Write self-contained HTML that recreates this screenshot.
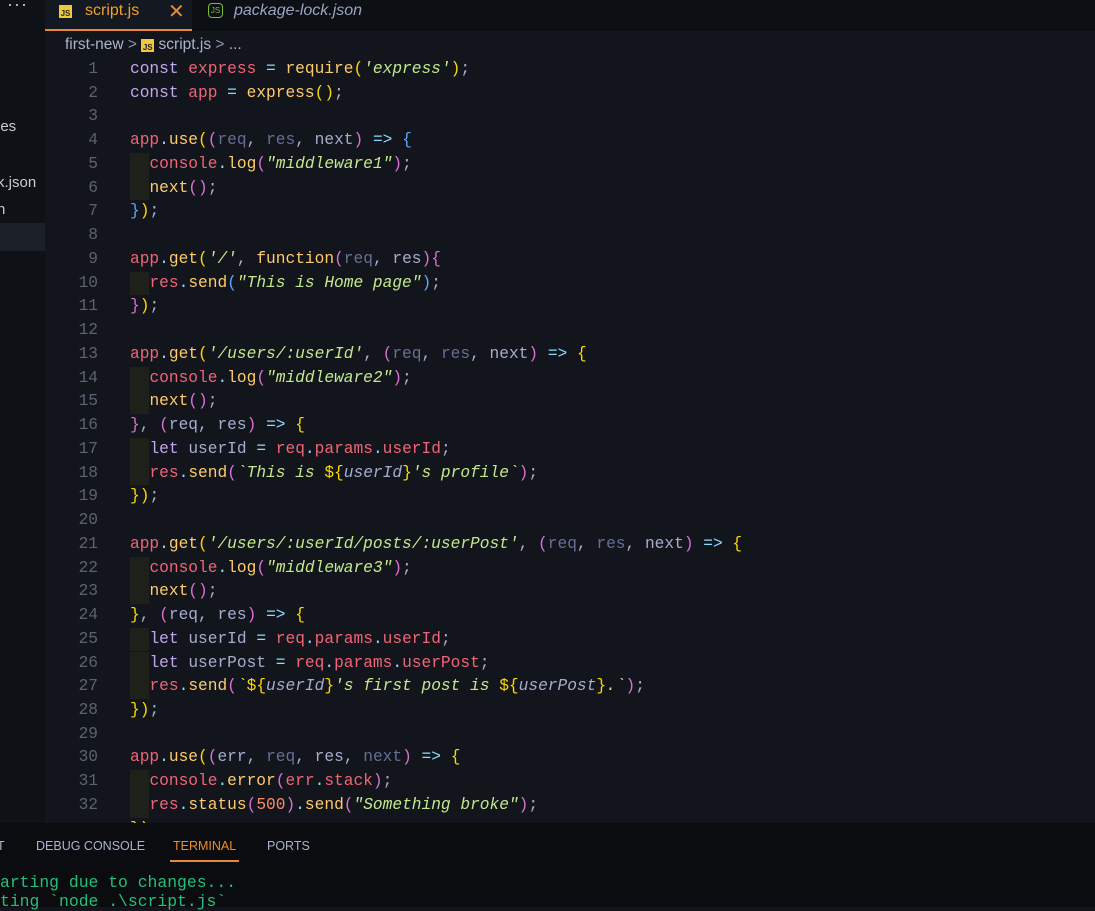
<!DOCTYPE html>
<html><head><meta charset="utf-8"><style>
body{margin:0;width:1095px;height:907px;overflow:hidden;background:#12151b;font-family:"Liberation Sans",sans-serif;position:relative}
.side{position:absolute;left:0;top:0;width:45px;height:823px;background:#0e1115;overflow:hidden}
.side div{position:absolute;color:#c8ccd4;font-size:15px;white-space:nowrap}
.tabs{position:absolute;left:45px;top:0;right:0;height:31px;background:#0c0f13}
.tab1{position:absolute;left:0;top:0;width:147px;height:29px;background:#141820;border-bottom:2px solid #e8893a}
.js{display:inline-block;background:#f0c83c;color:#222;font-size:8px;font-weight:bold;width:13px;height:13px;line-height:17px;text-align:center;box-sizing:border-box;position:absolute}
.code{position:absolute;left:0;top:0;font-family:"Liberation Mono",monospace;font-size:16.2px}
.ln{position:absolute;width:98px;text-align:right;color:#5c6370;left:0}
.cl{position:absolute;left:130px;white-space:pre;color:#a6accd}
.ig{position:absolute;left:130px;width:19px;background:#1e2119}
.k{color:#c0a6ec}.v{color:#f06478}.f{color:#ffcb6b}.d{color:#89ddff}.y{color:#ffd700}.p{color:#da70d6}.b{color:#5aa9ff}
.s{color:#c3e88d;font-style:italic}.u{color:#a6accd}.g{color:#676e95}.o{color:#89ddff}.n{color:#f78c6c}
.panel{position:absolute;left:0;top:823px;width:1095px;height:84px;background:#0a0c0f}
.pt{position:absolute;top:16px;font-size:12.5px;color:#a9b4cc}
.term{position:absolute;left:0;font-family:"Liberation Mono",monospace;font-size:16.4px;color:#23c07a;white-space:pre}
</style></head><body>
<div class="side">
<div style="left:7px;top:-6px;font-size:18px;letter-spacing:1px">···</div>
<div style="left:-3px;top:118px">les</div>
<div style="left:-3px;top:174px">k.json</div>
<div style="left:-3px;top:201px">n</div>
<div style="left:0;top:223px;width:45px;height:28px;background:#1a1f28"></div>
</div>
<div class="tabs">
<div class="tab1"><span class="js" style="left:14px;top:5px">JS</span><span style="position:absolute;left:40px;top:2px;color:#f0a030;font-size:16px">script.js</span><span style="position:absolute;left:123px;top:-1px;color:#f08a2a;font-size:20px">✕</span></div>
<span style="position:absolute;left:163px;top:3px;width:13px;height:13px;border:1.5px solid #7dbb3a;border-radius:4px;color:#7dbb3a;font-size:8px;text-align:center;line-height:14px">JS</span>
<span style="position:absolute;left:189px;top:2px;color:#9aa5c0;font-size:16px;font-style:italic">package-lock.json</span>
</div>
<div style="position:absolute;left:65px;top:36px;color:#a9b4cc;font-size:15.5px;white-space:nowrap">first-new <span style="color:#8a93a8">&gt;</span> <span class="js" style="position:relative;display:inline-block;top:1px">JS</span> script.js <span style="color:#8a93a8">&gt;</span> ...</div>
<div class="code" id="c"></div>
<div class="panel">
<div class="pt" style="left:-3px">T</div>
<div class="pt" style="left:36px">DEBUG CONSOLE</div>
<div class="pt" style="left:173px;color:#f08a2a">TERMINAL</div>
<div style="position:absolute;left:170px;top:37px;width:69px;height:2px;background:#e8893a"></div>
<div class="pt" style="left:267px">PORTS</div>
<div class="term" style="top:50px">arting due to changes...</div>
<div class="term" style="top:69px">ting `node .\script.js`</div>
</div>
<script>
var L=[
'<span class="k">const</span> <span class="v">express</span> <span class="o">=</span> <span class="f">require</span><span class="y">(</span><span class="s">\'express\'</span><span class="y">)</span>;',
'<span class="k">const</span> <span class="v">app</span> <span class="o">=</span> <span class="f">express</span><span class="y">()</span>;',
'',
'<span class="v">app</span><span class="d">.</span><span class="f">use</span><span class="y">(</span><span class="p">(</span><span class="g">req</span>, <span class="g">res</span>, <span class="u">next</span><span class="p">)</span> <span class="o">=&gt;</span> <span class="b">{</span>',
'  <span class="v">console</span><span class="d">.</span><span class="f">log</span><span class="p">(</span><span class="s">"middleware1"</span><span class="p">)</span>;',
'  <span class="f">next</span><span class="p">()</span>;',
'<span class="b">}</span><span class="y">)</span>;',
'',
'<span class="v">app</span><span class="d">.</span><span class="f">get</span><span class="y">(</span><span class="s">\'/\'</span>, <span class="f">function</span><span class="p">(</span><span class="g">req</span>, <span class="u">res</span><span class="p">)</span><span class="p">{</span>',
'  <span class="v">res</span><span class="d">.</span><span class="f">send</span><span class="b">(</span><span class="s">"This is Home page"</span><span class="b">)</span>;',
'<span class="p">}</span><span class="y">)</span>;',
'',
'<span class="v">app</span><span class="d">.</span><span class="f">get</span><span class="y">(</span><span class="s">\'/users/:userId\'</span>, <span class="p">(</span><span class="g">req</span>, <span class="g">res</span>, <span class="u">next</span><span class="p">)</span> <span class="o">=&gt;</span> <span class="y">{</span>',
'  <span class="v">console</span><span class="d">.</span><span class="f">log</span><span class="p">(</span><span class="s">"middleware2"</span><span class="p">)</span>;',
'  <span class="f">next</span><span class="p">()</span>;',
'<span class="p">}</span>, <span class="p">(</span><span class="u">req</span>, <span class="u">res</span><span class="p">)</span> <span class="o">=&gt;</span> <span class="y">{</span>',
'  <span class="k">let</span> <span class="u">userId</span> <span class="o">=</span> <span class="v">req</span><span class="d">.</span><span class="v">params</span><span class="d">.</span><span class="v">userId</span>;',
'  <span class="v">res</span><span class="d">.</span><span class="f">send</span><span class="p">(</span><span class="s">`This is </span><span class="y">${</span><span class="u" style="font-style:italic">userId</span><span class="y">}</span><span class="s">\'s profile`</span><span class="p">)</span>;',
'<span class="y">}</span><span class="y">)</span>;',
'',
'<span class="v">app</span><span class="d">.</span><span class="f">get</span><span class="y">(</span><span class="s">\'/users/:userId/posts/:userPost\'</span>, <span class="p">(</span><span class="g">req</span>, <span class="g">res</span>, <span class="u">next</span><span class="p">)</span> <span class="o">=&gt;</span> <span class="y">{</span>',
'  <span class="v">console</span><span class="d">.</span><span class="f">log</span><span class="p">(</span><span class="s">"middleware3"</span><span class="p">)</span>;',
'  <span class="f">next</span><span class="p">()</span>;',
'<span class="y">}</span>, <span class="p">(</span><span class="u">req</span>, <span class="u">res</span><span class="p">)</span> <span class="o">=&gt;</span> <span class="y">{</span>',
'  <span class="k">let</span> <span class="u">userId</span> <span class="o">=</span> <span class="v">req</span><span class="d">.</span><span class="v">params</span><span class="d">.</span><span class="v">userId</span>;',
'  <span class="k">let</span> <span class="u">userPost</span> <span class="o">=</span> <span class="v">req</span><span class="d">.</span><span class="v">params</span><span class="d">.</span><span class="v">userPost</span>;',
'  <span class="v">res</span><span class="d">.</span><span class="f">send</span><span class="p">(</span><span class="s">`</span><span class="y">${</span><span class="u" style="font-style:italic">userId</span><span class="y">}</span><span class="s">\'s first post is </span><span class="y">${</span><span class="u" style="font-style:italic">userPost</span><span class="y">}</span><span class="s">.`</span><span class="p">)</span>;',
'<span class="y">}</span><span class="y">)</span>;',
'',
'<span class="v">app</span><span class="d">.</span><span class="f">use</span><span class="y">(</span><span class="p">(</span><span class="u">err</span>, <span class="g">req</span>, <span class="u">res</span>, <span class="g">next</span><span class="p">)</span> <span class="o">=&gt;</span> <span class="y">{</span>',
'  <span class="v">console</span><span class="d">.</span><span class="f">error</span><span class="p">(</span><span class="v">err</span><span class="d">.</span><span class="v">stack</span><span class="p">)</span>;',
'  <span class="v">res</span><span class="d">.</span><span class="f">status</span><span class="p">(</span><span class="n">500</span><span class="p">)</span><span class="d">.</span><span class="f">send</span><span class="p">(</span><span class="s">"Something broke"</span><span class="p">)</span>;',
'<span class="y">}</span><span class="y">)</span>;'
];
var h='',lh=23.74;
for(var i=0;i<L.length;i++){var t=58+lh*i;
if(L[i].indexOf('  ')===0)h+='<div class="ig" style="top:'+t+'px;height:'+lh+'px"></div>';
h+='<div class="ln" style="top:'+(t+2)+'px">'+(i<32?i+1:'')+'</div><div class="cl" style="top:'+(t+2)+'px">'+L[i]+'</div>';}
document.getElementById('c').innerHTML=h;
</script>
</body></html>
